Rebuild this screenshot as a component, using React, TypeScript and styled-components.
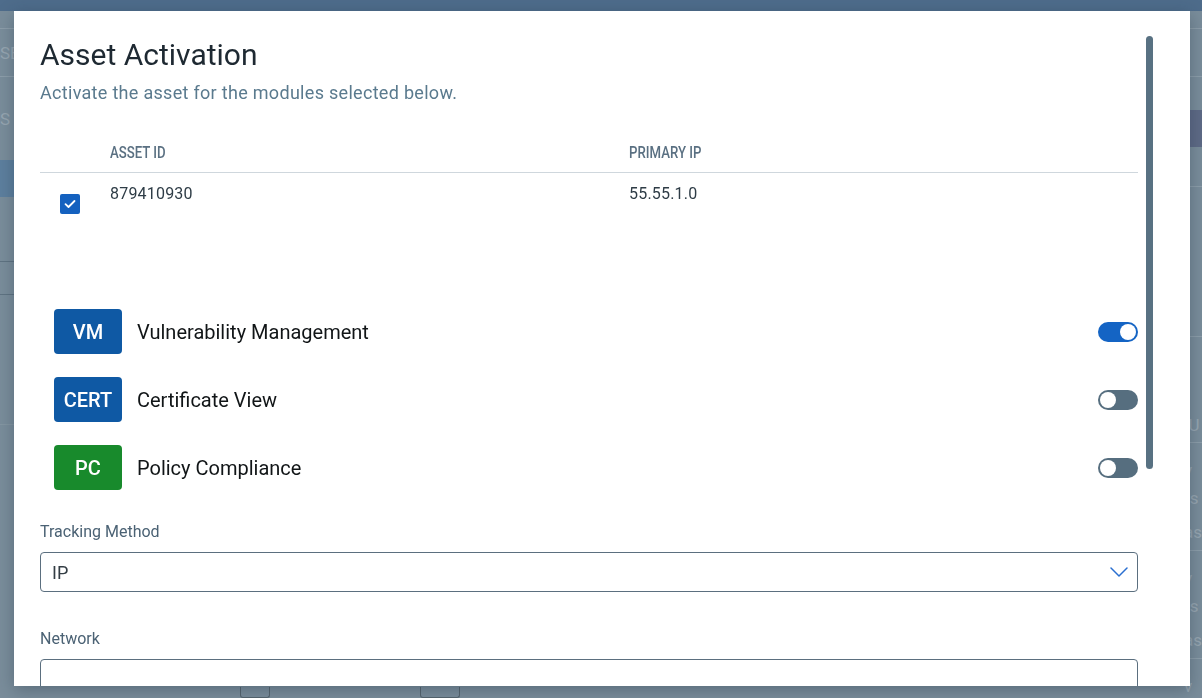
import * as React from 'react';
import styled, { createGlobalStyle } from 'styled-components';

const GlobalStyle = createGlobalStyle`
    html, body {
        margin: 0;
        padding: 0;
        width: 1202px;
        height: 698px;
        overflow: hidden;
        font-family: Roboto, "Liberation Sans", sans-serif;
    }
    * {
        box-sizing: border-box;
    }
`;

type Module = {
    code: string;
    name: string;
    color: string;
    enabled: boolean;
};

const modules: Module[] = [
    { code: 'VM', name: 'Vulnerability Management', color: '#0f59a4', enabled: true },
    { code: 'CERT', name: 'Certificate View', color: '#0f59a4', enabled: false },
    { code: 'PC', name: 'Policy Compliance', color: '#188a2c', enabled: false },
];

// page behind the dialog, dimmed
const Backdrop = styled.div`
    width: 1202px;
    height: 698px;
    background: #7a8d9b;
    display: flex;
    flex-direction: column;
    overflow: hidden;
`;

const BackdropTop = styled.div`
    flex: none;
    height: 11px;
    background: #4e6c8b;
`;

const BackdropBody = styled.div`
    flex: 1;
    min-height: 0;
    display: flex;
    overflow: hidden;
`;

const BackdropColumn = styled.div`
    flex: 1;
    display: flex;
    flex-direction: column;
`;

const BackdropRow = styled.div<{ $h: number; $bg?: string; $line?: string; $right?: boolean }>`
    flex: none;
    height: ${(p) => p.$h}px;
    background: ${(p) => p.$bg ?? 'transparent'};
    border-bottom: ${(p) => (p.$line ? `1px solid ${p.$line}` : 'none')};
    color: #97a6b1;
    font-size: 17px;
    display: flex;
    align-items: center;
    padding-left: ${(p) => (p.$right ? '591px' : '0')};
    white-space: nowrap;
    overflow: hidden;
`;

const FooterButtons = styled.div`
    display: flex;
    gap: 150px;
    padding-left: 240px;
    margin-top: auto;
`;

const GhostButton = styled.div<{ $w: number }>`
    width: ${(p) => p.$w}px;
    height: 11px;
    border: 1px solid #55646e;
    border-top: none;
    border-radius: 0 0 3px 3px;
`;

const Modal = styled.div`
    position: fixed;
    left: 14px;
    top: 11px;
    width: 1176px;
    height: 675px;
    background: #ffffff;
    box-shadow: 0 4px 16px rgba(30, 45, 60, 0.35);
    overflow: hidden;
`;

const Content = styled.div`
    padding: 27px 52px 0 26px;
    display: flex;
    flex-direction: column;
`;

const ScrollThumb = styled.div`
    position: absolute;
    left: 1132px;
    top: 25px;
    width: 7px;
    height: 433px;
    border-radius: 4px;
    background: #587182;
`;

const Title = styled.h1`
    margin: 0;
    font-size: 30px;
    font-weight: 400;
    line-height: 34px;
    color: #1e2932;
`;

const Subtitle = styled.p`
    margin: 10px 0 0;
    font-size: 18px;
    letter-spacing: 0.3px;
    line-height: 22px;
    color: #5a7a8e;
`;

const Table = styled.div`
    margin-top: 27px;
    display: flex;
    flex-direction: column;
`;

const TableRow = styled.div<{ $head?: boolean }>`
    display: grid;
    grid-template-columns: 70px 519px 1fr;
    align-items: start;
    height: ${(p) => (p.$head ? '42px' : 'auto')};
    padding-top: 12px;
    border-bottom: ${(p) => (p.$head ? '1px solid #cfd7dd' : 'none')};
`;

const HeadCell = styled.div`
    font-size: 16.5px;
    font-weight: 500;
    line-height: 20px;
    color: #5a7082;
    transform: scaleX(0.8);
    transform-origin: left center;
    white-space: nowrap;
`;

const Cell = styled.div`
    font-size: 16px;
    letter-spacing: 0.2px;
    line-height: 18px;
    color: #2e3c46;
`;

const CheckBox = styled.div`
    width: 20px;
    height: 20px;
    margin: 9px 0 0 20px;
    border-radius: 2px;
    background: #1461bf;
    display: flex;
    align-items: center;
    justify-content: center;
`;

const ModuleList = styled.div`
    margin-top: 95px;
    display: flex;
    flex-direction: column;
    gap: 23px;
    padding-left: 14px;
`;

const ModuleRow = styled.div`
    display: flex;
    align-items: center;
    height: 45px;
`;

const Badge = styled.div<{ $color: string }>`
    width: 68px;
    height: 45px;
    border-radius: 4px;
    background: ${(p) => p.$color};
    color: #ffffff;
    font-size: 20px;
    font-weight: 500;
    display: flex;
    align-items: center;
    justify-content: center;
`;

const ModuleName = styled.div`
    margin-left: 15px;
    font-size: 20px;
    color: #111517;
    flex: 1;
`;

const Toggle = styled.div<{ $on: boolean }>`
    width: 40px;
    height: 20px;
    border-radius: 10px;
    padding: 2px;
    background: ${(p) => (p.$on ? '#1464c4' : '#566e7f')};
    display: flex;
    justify-content: ${(p) => (p.$on ? 'flex-end' : 'flex-start')};
`;

const Knob = styled.div`
    width: 16px;
    height: 16px;
    border-radius: 50%;
    background: #ffffff;
`;

const Field = styled.div<{ $top: number }>`
    margin-top: ${(p) => p.$top}px;
    display: flex;
    flex-direction: column;
`;

const FieldLabel = styled.label`
    font-size: 16px;
    line-height: 19px;
    color: #4b6274;
`;

const Select = styled.div`
    margin-top: 11px;
    height: 40px;
    border: 1px solid #5b6f7f;
    border-radius: 4px;
    padding: 0 9px 0 11px;
    display: flex;
    align-items: center;
    justify-content: space-between;
    font-size: 18px;
    color: #333d44;
`;

const Check = () => (
    <svg width="12" height="10" viewBox="0 0 12 10" fill="none">
        <path d="M1.5 5.2 L4.5 8 L10.5 2" stroke="#ffffff" strokeWidth="1.8" strokeLinecap="round" strokeLinejoin="round" />
    </svg>
);

const Chevron = () => (
    <svg width="18" height="10" viewBox="0 0 18 10" fill="none">
        <path d="M1 1 L9 9 L17 1" stroke="#2a6fd0" strokeWidth="1.5" strokeLinecap="round" strokeLinejoin="round" />
    </svg>
);

const sideGroup = (n: number) => [
    <BackdropRow key={`s${n}`} $right $h={14} />,
    <BackdropRow key={`v${n}`} $right $h={26}>v</BackdropRow>,
    <BackdropRow key={`r${n}`} $right $h={30}>rs</BackdropRow>,
    <BackdropRow key={`a${n}`} $right $h={38} $line="#8d9eaa">as</BackdropRow>,
];

const App: React.FC = () => {
    return (
        <>
            <GlobalStyle />
            <Backdrop>
                <BackdropTop />
                <BackdropBody>
                    <BackdropColumn>
                        <BackdropRow $h={18} $line="#8d9eaa" />
                        <BackdropRow $h={48} $line="#8d9eaa">SE</BackdropRow>
                        <BackdropRow $h={83}>S</BackdropRow>
                        <BackdropRow $h={37} $bg="#5d7f9e" />
                        <BackdropRow $h={65} $line="#5f7382" />
                        <BackdropRow $h={33} $line="#5f7382" />
                        <BackdropRow $h={130} $line="#8496a2" />
                        <FooterButtons>
                            <GhostButton $w={30} />
                            <GhostButton $w={40} />
                        </FooterButtons>
                    </BackdropColumn>
                    <BackdropColumn>
                        <BackdropRow $right $h={18} $line="#8d9eaa" />
                        <BackdropRow $right $h={48} $line="#8d9eaa" />
                        <BackdropRow $right $h={33} />
                        <BackdropRow $right $h={37} $bg="#5e6a86" />
                        <BackdropRow $right $h={40} $line="#8d9eaa" />
                        <BackdropRow $right $h={150} $line="#8d9eaa" />
                        <BackdropRow $right $h={70} />
                        <BackdropRow $right $h={36} $line="#8d9eaa">IU</BackdropRow>
                        {sideGroup(1)}
                        {sideGroup(2)}
                        <BackdropRow $right $h={14} />
                        <BackdropRow $right $h={26}>v</BackdropRow>
                    </BackdropColumn>
                </BackdropBody>
            </Backdrop>
            <Modal>
                <ScrollThumb />
                <Content>
                    <Title>Asset Activation</Title>
                    <Subtitle>Activate the asset for the modules selected below.</Subtitle>
                    <Table>
                        <TableRow $head>
                            <div />
                            <HeadCell>ASSET ID</HeadCell>
                            <HeadCell>PRIMARY IP</HeadCell>
                        </TableRow>
                        <TableRow>
                            <CheckBox>
                                <Check />
                            </CheckBox>
                            <Cell>879410930</Cell>
                            <Cell>55.55.1.0</Cell>
                        </TableRow>
                    </Table>
                    <ModuleList>
                        {modules.map((m) => (
                            <ModuleRow key={m.code}>
                                <Badge $color={m.color}>{m.code}</Badge>
                                <ModuleName>{m.name}</ModuleName>
                                <Toggle $on={m.enabled}>
                                    <Knob />
                                </Toggle>
                            </ModuleRow>
                        ))}
                    </ModuleList>
                    <Field $top={32}>
                        <FieldLabel>Tracking Method</FieldLabel>
                        <Select>
                            <span>IP</span>
                            <Chevron />
                        </Select>
                    </Field>
                    <Field $top={37}>
                        <FieldLabel>Network</FieldLabel>
                        <Select />
                    </Field>
                </Content>
            </Modal>
        </>
    );
};

export default App;
